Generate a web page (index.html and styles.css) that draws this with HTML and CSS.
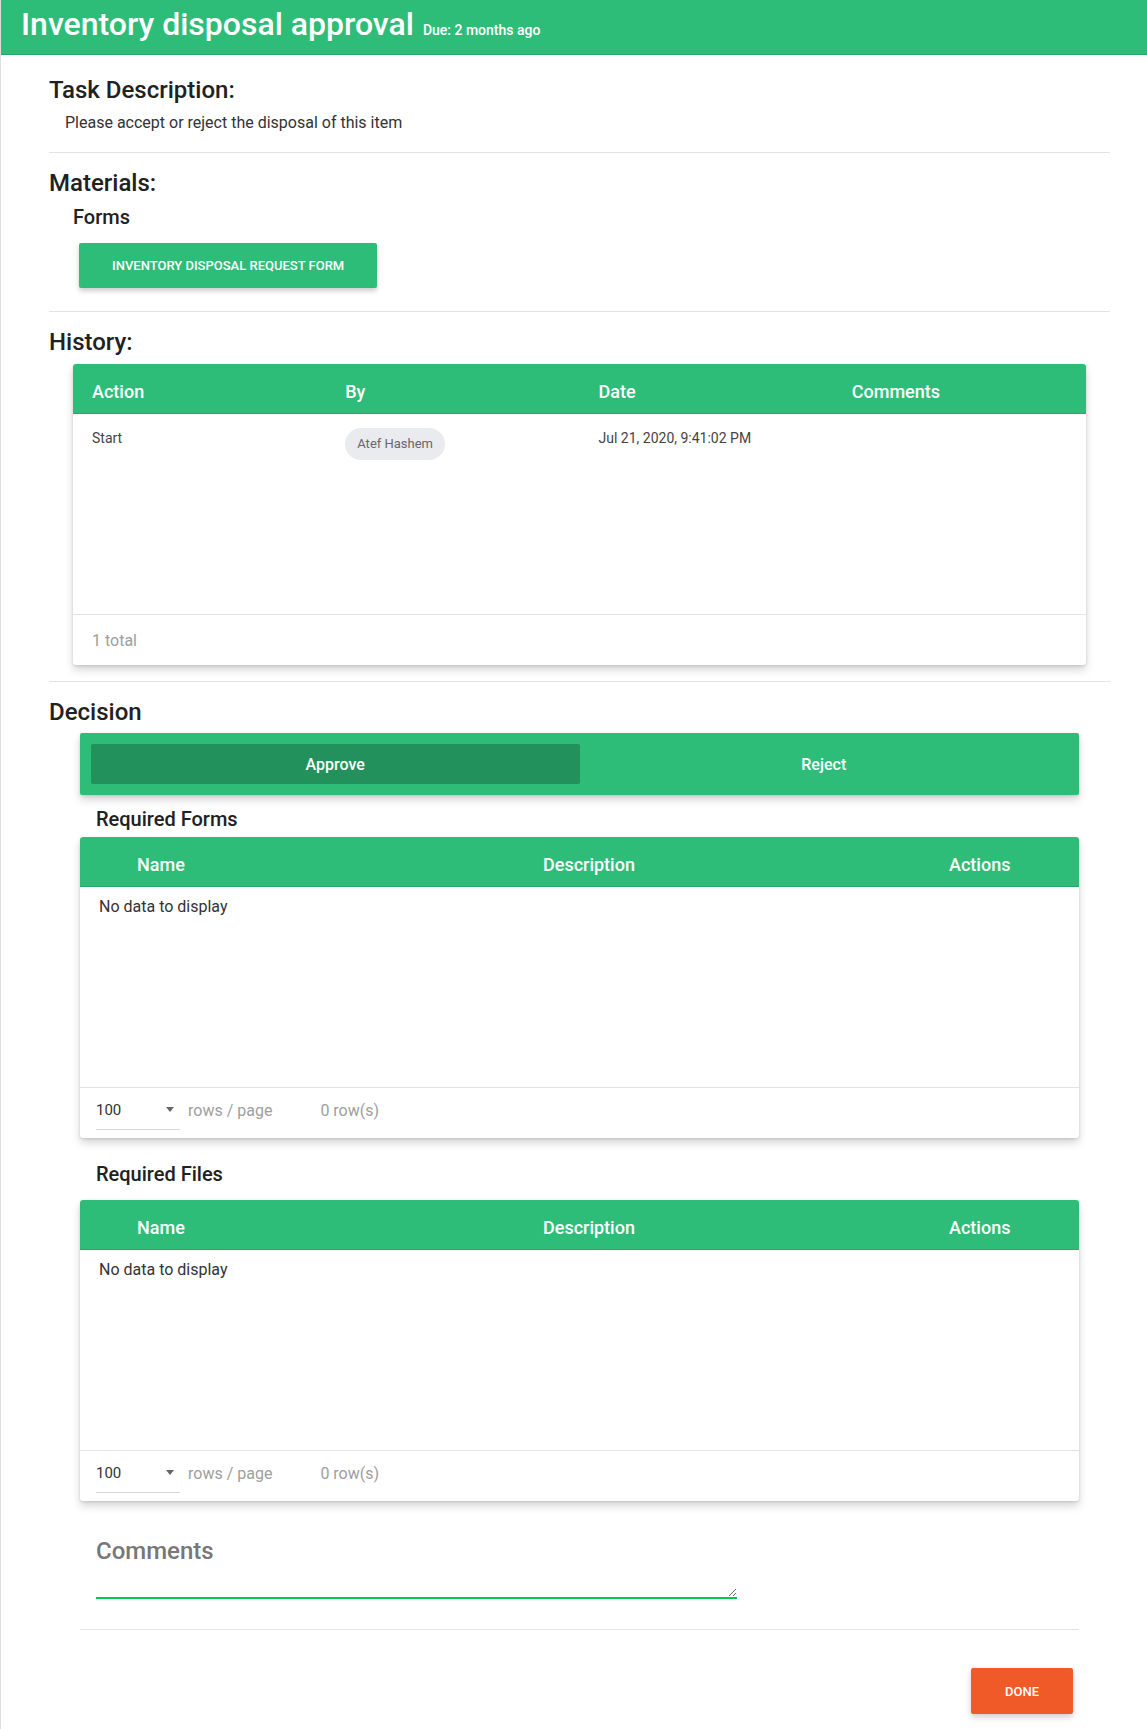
FILE: index.html
```html
<!DOCTYPE html>
<html lang="en">
<head>
  <meta charset="UTF-8">
  <meta name="viewport" content="width=device-width, initial-scale=1.0">
  <title>Inventory disposal approval</title>
  <link rel="stylesheet" href="styles.css">
</head>
<body>

  <div class="page">
    <!-- Task header -->
    <div class="task-header">
      <h1>Inventory disposal approval</h1>
      <span class="due">Due: 2 months ago</span>
    </div>

    <div class="content">
      <!-- Description -->
      <section class="section">
        <h2>Task Description:</h2>
        <p class="description">Please accept or reject the disposal of this item</p>
      </section>

      <!-- Materials -->
      <section class="section">
        <h2>Materials:</h2>
        <h3 class="sub-title">Forms</h3>
        <button class="form-btn">INVENTORY DISPOSAL REQUEST FORM</button>
      </section>

      <!-- History -->
      <section class="section history">
        <h2>History:</h2>
        <div class="card history-table">
          <div class="table-head history-cols">
            <div>Action</div>
            <div>By</div>
            <div>Date</div>
            <div>Comments</div>
          </div>
          <div class="table-body">
            <div class="history-cols history-row">
              <div>Start</div>
              <div><span class="chip">Atef Hashem</span></div>
              <div>Jul 21, 2020, 9:41:02 PM</div>
              <div></div>
            </div>
          </div>
          <div class="table-foot">
            <span class="muted">1 total</span>
          </div>
        </div>
      </section>

      <!-- Decision -->
      <section class="section last">
        <h2>Decision</h2>
        <div class="decision-body">
          <div class="toggle-bar">
            <button class="toggle-btn active">Approve</button>
            <button class="toggle-btn">Reject</button>
          </div>

          <h3 class="group-title">Required Forms</h3>
          <div class="card data-table">
            <div class="table-head req-cols">
              <div>Name</div>
              <div>Description</div>
              <div>Actions</div>
            </div>
            <div class="table-body">
              <p class="empty">No data to display</p>
            </div>
            <div class="table-foot">
              <div class="page-select">
                <span>100</span>
                <span class="arrow"></span>
              </div>
              <span class="muted rows-label">rows / page</span>
              <span class="muted rows-count">0 row(s)</span>
            </div>
          </div>

          <h3 class="group-title files">Required Files</h3>
          <div class="card data-table">
            <div class="table-head req-cols">
              <div>Name</div>
              <div>Description</div>
              <div>Actions</div>
            </div>
            <div class="table-body">
              <p class="empty">No data to display</p>
            </div>
            <div class="table-foot">
              <div class="page-select">
                <span>100</span>
                <span class="arrow"></span>
              </div>
              <span class="muted rows-label">rows / page</span>
              <span class="muted rows-count">0 row(s)</span>
            </div>
          </div>

          <div class="comment-field">
            <label for="comments">Comments</label>
            <textarea id="comments"></textarea>
          </div>

          <div class="actions">
            <button class="done-btn">DONE</button>
          </div>
        </div>
      </section>
    </div>
  </div>

</body>
</html>
```

FILE: styles.css
```css
:root {
  --green: #2ebd78;
  --green-dark: #23915c;
  --green-line: #28a96b;
  --focus-green: #00c853;
  --orange: #f05a28;
  --title-color: #212121;
  --text-color: #333;
  --muted-color: #9e9e9e;
  --divider: #e3e3e3;
  --card-shadow: 0 5px 9px rgba(0, 0, 0, 0.16), 0 1px 3px rgba(0, 0, 0, 0.12);
}

body {
  margin: 0;
  font-family: Roboto, "Noto Sans", sans-serif;
  color: var(--text-color);
  background-color: #fff;
}

.page {
  min-height: 100vh;
  border-left: 1px solid #dedede;
}

/* Header */
.task-header {
  display: flex;
  align-items: baseline;
  gap: 9px;
  height: 55px;
  box-sizing: border-box;
  padding: 8px 20px 0;
  background-color: var(--green);
  border-bottom: 1px solid var(--green-line);
}

.task-header h1 {
  margin: 0;
  font-size: 32px;
  line-height: 32px;
  font-weight: 500;
  color: #fff;
}

.due {
  font-size: 14px;
  font-weight: 500;
  color: #fff;
}

.content {
  padding: 0 37px 0 48px;
}

.section {
  padding: 21px 0 18px;
  border-bottom: 1px solid var(--divider);
}

.section + .section {
  padding-top: 16px;
}

.section.history {
  padding-bottom: 16px;
}

.section.last {
  border-bottom: none;
  padding-bottom: 14px;
}

.section h2 {
  margin: 0;
  font-size: 24px;
  line-height: 28px;
  font-weight: 500;
  color: var(--title-color);
}

.description {
  margin: 9px 0 1px 16px;
  font-size: 16px;
  line-height: 20px;
}

.sub-title {
  margin: 8px 0 0 24px;
  font-size: 20px;
  line-height: 24px;
  font-weight: 500;
  color: var(--title-color);
}

.form-btn {
  display: block;
  margin: 14px 0 5px 30px;
  height: 45px;
  padding: 0 33px;
  border: none;
  border-radius: 2px;
  background-color: var(--green);
  color: #fff;
  font-family: inherit;
  font-size: 13px;
  font-weight: 500;
  box-shadow: 0 3px 5px rgba(0, 0, 0, 0.2);
  cursor: pointer;
}

/* Cards and tables */
.card {
  background-color: #fff;
  border-radius: 3px;
  overflow: hidden;
  box-shadow: var(--card-shadow);
}

.history-table {
  margin: 8px 24px 0;
}

.table-head {
  height: 50px;
  box-sizing: border-box;
  padding-top: 6px;
  align-items: center;
  background-color: var(--green);
  border-bottom: 1px solid var(--green-line);
  color: #fff;
  font-size: 18px;
  font-weight: 500;
}

.history-cols {
  display: grid;
  grid-template-columns: repeat(4, 1fr);
}

.history-cols > div {
  padding-left: 19px;
}

.table-body {
  height: 200px;
  box-sizing: border-box;
}

.history-row {
  padding-top: 14px;
  font-size: 14px;
  line-height: 20px;
  color: #444;
}

.chip {
  display: inline-block;
  height: 32px;
  line-height: 32px;
  padding: 0 12px;
  border-radius: 16px;
  background-color: #e9ebee;
  color: #666;
  font-size: 13px;
}

.table-foot {
  display: flex;
  align-items: center;
  height: 51px;
  box-sizing: border-box;
  padding: 0 19px;
  border-top: 1px solid var(--divider);
  font-size: 16px;
}

.muted {
  color: var(--muted-color);
}

/* Decision */
.decision-body {
  margin: 7px 31px 0;
}

.toggle-bar {
  display: flex;
  padding: 11px;
  background-color: var(--green);
  border-radius: 2px;
  box-shadow: var(--card-shadow);
}

.toggle-btn {
  flex: 1;
  height: 40px;
  border: none;
  border-radius: 2px;
  background: transparent;
  color: #fff;
  font-family: inherit;
  font-size: 16px;
  font-weight: 500;
  cursor: pointer;
}

.toggle-btn.active {
  background-color: var(--green-dark);
}

.group-title {
  margin: 12px 0 6px 16px;
  font-size: 20px;
  line-height: 24px;
  font-weight: 500;
  color: var(--title-color);
}

.group-title.files {
  margin-top: 24px;
  margin-bottom: 14px;
}

.req-cols {
  display: grid;
  grid-template-columns: 406px 406px 1fr;
}

.req-cols > div {
  padding-left: 57px;
}

.empty {
  margin: 0;
  padding: 10px 19px 0;
  font-size: 16px;
  line-height: 20px;
}

.data-table .table-foot {
  align-items: flex-start;
  padding: 11px 16px 0;
  line-height: 20px;
}

.page-select {
  display: flex;
  align-items: center;
  width: 84px;
  height: 31px;
  box-sizing: border-box;
  padding-bottom: 9px;
  border-bottom: 1px solid #d6d6d6;
  color: var(--text-color);
  font-size: 15px;
}

.page-select span:first-child {
  flex: 1;
}

.arrow {
  width: 0;
  height: 0;
  margin-right: 6px;
  border-left: 4px solid transparent;
  border-right: 4px solid transparent;
  border-top: 5px solid #666;
}

.rows-label {
  margin-left: 8px;
  margin-top: 2px;
}

.rows-count {
  margin-left: 48px;
  margin-top: 2px;
}

/* Comments */
.comment-field {
  display: flex;
  flex-direction: column;
  width: 641px;
  margin: 36px 0 0 16px;
}

.comment-field label {
  font-size: 24px;
  line-height: 28px;
  font-weight: 500;
  color: #777;
}

.comment-field textarea {
  display: block;
  height: 34px;
  box-sizing: border-box;
  padding: 0;
  border: none;
  border-bottom: 2px solid var(--focus-green);
  outline: none;
  resize: vertical;
  font-family: inherit;
  font-size: 16px;
}

.actions {
  display: flex;
  justify-content: flex-end;
  margin-top: 30px;
  padding: 38px 6px 0;
  border-top: 1px solid var(--divider);
}

.done-btn {
  width: 102px;
  height: 46px;
  border: none;
  border-radius: 2px;
  background-color: var(--orange);
  color: #fff;
  font-family: inherit;
  font-size: 13px;
  font-weight: 500;
  box-shadow: 0 3px 6px rgba(0, 0, 0, 0.2);
  cursor: pointer;
}
```
